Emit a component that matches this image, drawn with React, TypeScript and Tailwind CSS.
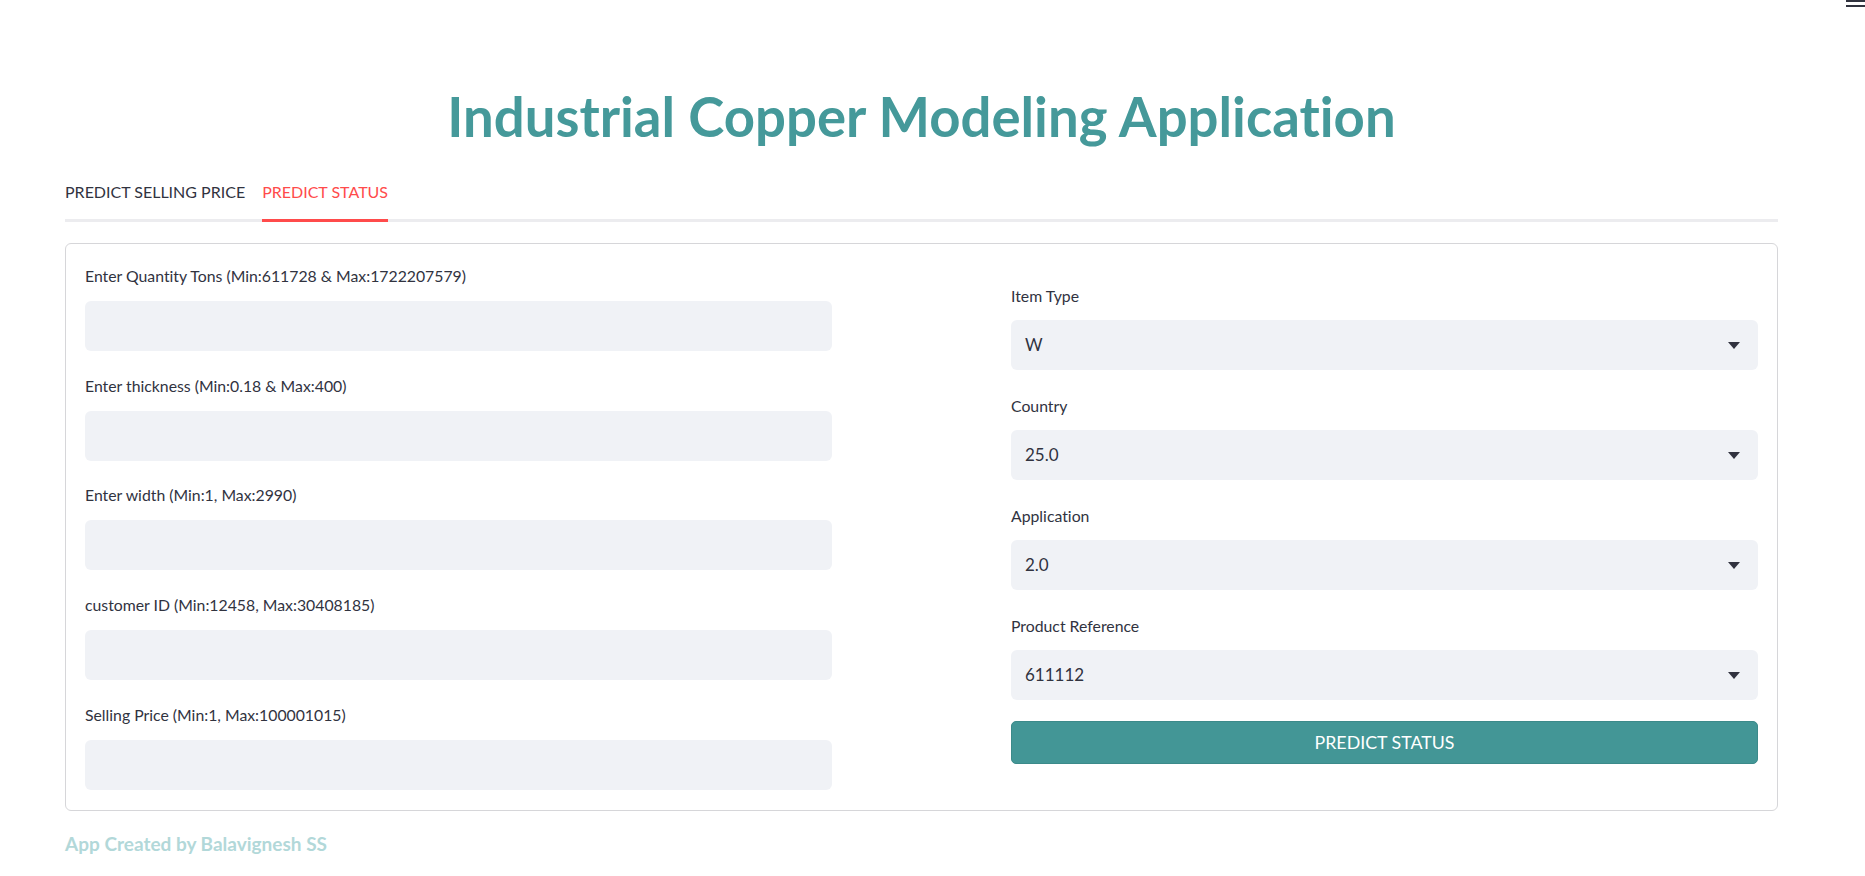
import {useState} from "react";

const leftFields = [
    'Enter Quantity Tons (Min:611728 & Max:1722207579)',
    'Enter thickness (Min:0.18 & Max:400)',
    'Enter width (Min:1, Max:2990)',
    'customer ID (Min:12458, Max:30408185)',
    'Selling Price (Min:1, Max:100001015)',
]

const rightFields = [
    {label: 'Item Type', value: 'W'},
    {label: 'Country', value: '25.0'},
    {label: 'Application', value: '2.0'},
    {label: 'Product Reference', value: '611112'},
]

function Caret() {
    return (
        <svg width="12" height="7" viewBox="0 0 12 7" className="shrink-0">
            <path d="M0 0 L12 0 L6 7 Z" fill="#31333f"/>
        </svg>
    )
}

export default function App() {
    const [tab, setTab] = useState(1)

    return (
        <div className="relative min-h-screen bg-white text-[#31333f] [font-variant-ligatures:none]"
             style={{fontFamily: 'Lato, "Noto Sans", sans-serif'}}>
            <div className="absolute right-0 top-0 w-[19px]">
                <div className="h-[2px] bg-[#31333f]"/>
                <div className="mt-[3px] h-[2px] bg-[#31333f]"/>
            </div>

            <div className="pl-[65px] pr-[87px]">
                <h1 className="pt-[81px] text-center text-[54.5px] font-bold leading-[70px] text-[#45999a]">
                    Industrial Copper Modeling Application
                </h1>

                <div className="mt-[27px] flex gap-[17px] border-b-[3px] border-[#ececef]">
                    {['PREDICT SELLING PRICE', 'PREDICT STATUS'].map((t, i) => (
                        <button key={t} onClick={() => setTab(i)}
                                className={`-mb-[3px] h-[44px] border-b-[3px] pb-[13px] text-[16px] ${tab === i ? 'border-[#ff4b4b] text-[#ff4b4b]' : 'border-transparent text-[#31333f]'}`}>
                            {t}
                        </button>
                    ))}
                </div>

                <div className="mt-[21px] rounded-[6px] border border-[#d6d6d9] px-[19px] py-[20px]">
                    <div className="grid grid-cols-2 gap-[179px]">
                        <div className="flex flex-col">
                            {leftFields.map((label, i) => (
                                <div key={label} className={i > 0 ? 'mt-[22.7px]' : ''}>
                                    <p className="h-[24px] text-[15.8px] leading-[24px]">{label}</p>
                                    <input className="mt-[13px] h-[50px] w-full rounded-[6px] bg-[#f0f2f6] px-[14px] text-[17px] outline-none"/>
                                </div>
                            ))}
                        </div>
                        <div className="flex flex-col pt-[20px]">
                            {rightFields.map((f, i) => (
                                <div key={f.label} className={i > 0 ? 'mt-[24px]' : ''}>
                                    <p className="h-[24px] text-[15.8px] leading-[24px]">{f.label}</p>
                                    <div className="mt-[12px] flex h-[50px] items-center justify-between rounded-[6px] bg-[#f0f2f6] pl-[14px] pr-[18px]">
                                        <span className="text-[17px]">{f.value}</span>
                                        <Caret/>
                                    </div>
                                </div>
                            ))}
                            <button className="mt-[21px] h-[43px] w-full rounded-[5px] border border-[#3c8a8a] bg-[#439696] text-[17.8px] text-white">
                                PREDICT STATUS
                            </button>
                        </div>
                    </div>
                </div>

                <p className="mt-[19px] text-[19px] font-bold text-[#b2d8d9]">App Created by Balavignesh SS</p>
            </div>
        </div>
    )
}
